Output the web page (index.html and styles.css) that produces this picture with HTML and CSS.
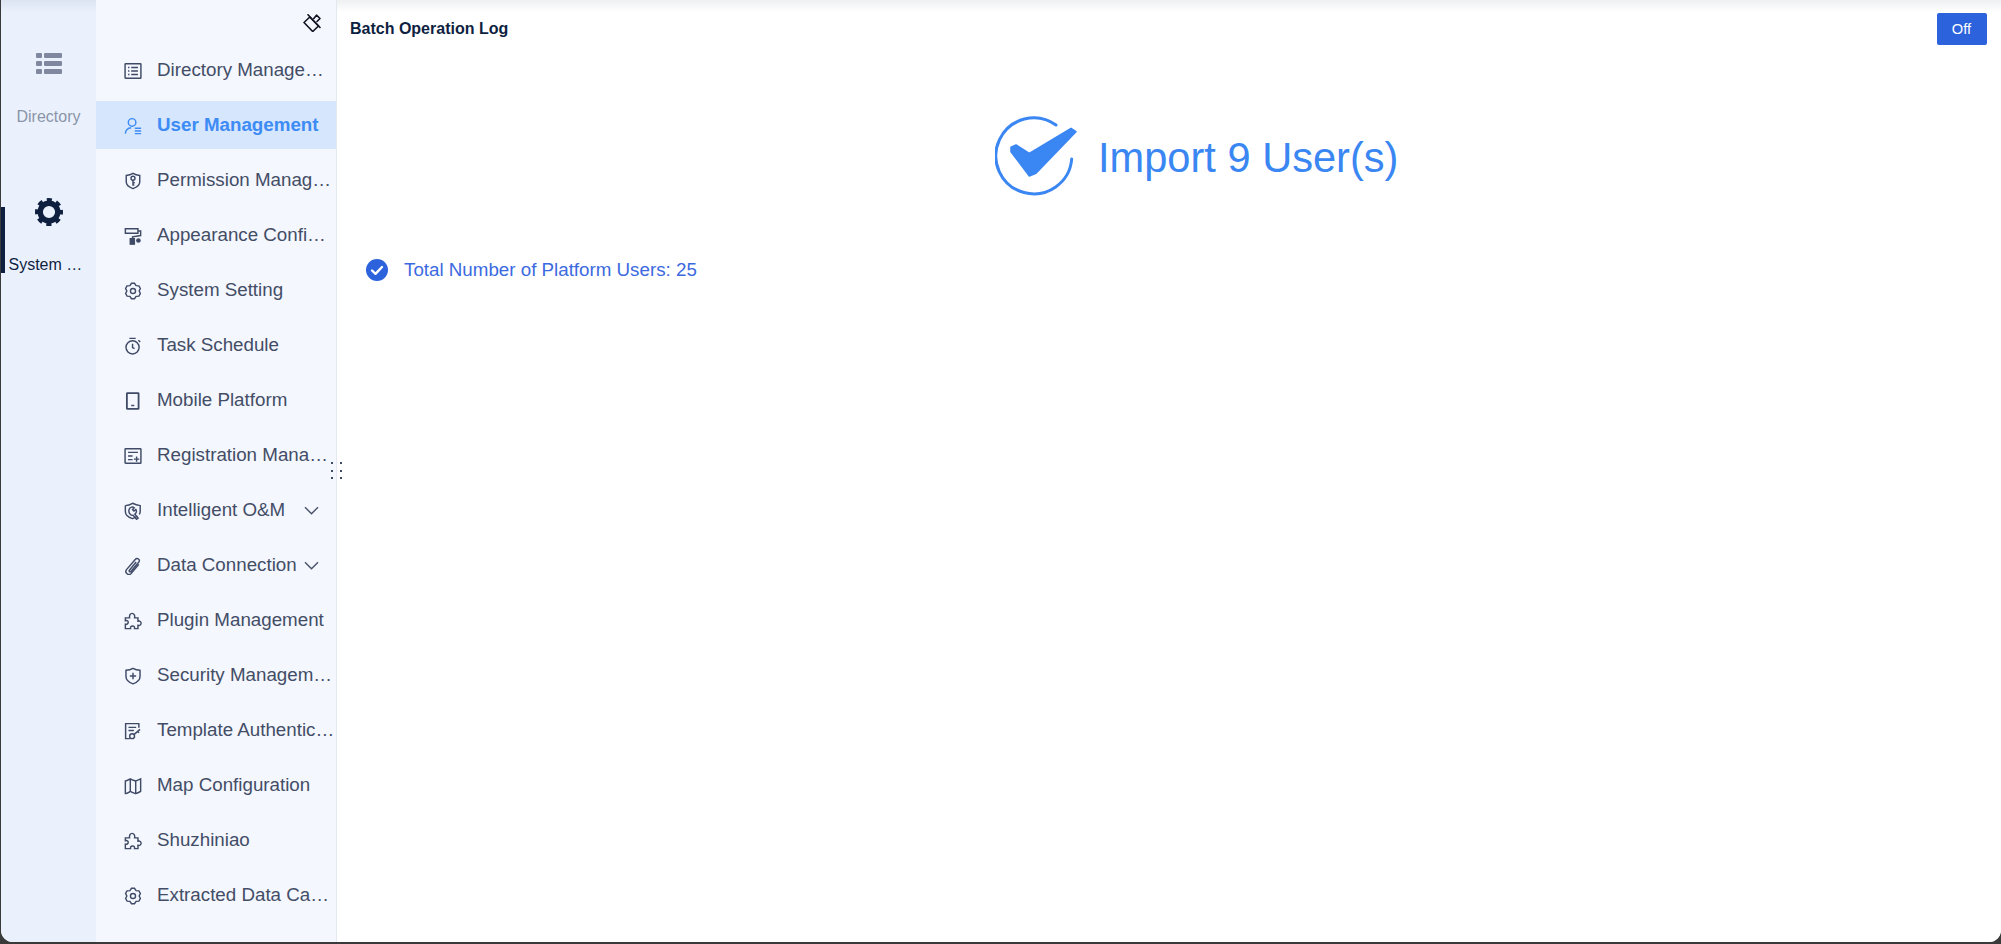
FILE: index.html
```html
<!DOCTYPE html>
<html lang="en">
<head>
<meta charset="utf-8">
<title>Batch Operation Log</title>
<link rel="stylesheet" href="styles.css">
</head>
<body>
<div class="app">
  <div class="topshade"></div>
  <nav class="rail">
    <div class="tab">
      <svg class="tab-icon" viewBox="0 0 26 26"><g fill="#7f889f"><rect x="0" y="2" width="6" height="5" rx="1"/><rect x="8" y="2" width="18" height="5" rx="1"/><rect x="0" y="10" width="6" height="5" rx="1"/><rect x="8" y="10" width="18" height="5" rx="1"/><rect x="0" y="18" width="6" height="5" rx="1"/><rect x="8" y="18" width="18" height="5" rx="1"/></g></svg>
      <div class="tab-label">Directory</div>
    </div>
    <div class="tab tab-active">
      <svg class="tab-icon" viewBox="0 0 28 28"><circle cx="14" cy="14" r="8.8" fill="none" stroke="#0f1f3f" stroke-width="5.4"/><circle cx="14" cy="14" r="12" fill="none" stroke="#0f1f3f" stroke-width="4" stroke-dasharray="5 4.42" stroke-dashoffset="2.5"/></svg>
      <div class="tab-label">System Management</div>
    </div>
  </nav>
  <aside class="menu">
    <div class="pin-row">
      <svg class="pin" viewBox="0 0 18 18" fill="none" stroke="#0f1320" stroke-width="1.6" stroke-linejoin="round" stroke-linecap="round"><path d="M1 8.500L6.800 3l8.700 9-5.800 5.500z"/><path d="M10.800 4.500L13.500 1.200 17 4.500l-3 3"/><path d="M5 .8L17 13.500"/></svg>
    </div>
    <ul class="items">
      <li class="item"><svg class="ico" viewBox="0 0 20 20"><rect x="1.200" y="2" width="17.600" height="16" rx=".6"/><path d="M4.500 6.200h1.500M8 6.200h7.500M4.500 10h1.500M8 10h7.500M4.500 13.800h1.500M8 13.800h7.500"/></svg><span class="label">Directory Management</span></li>
      <li class="item item-active"><svg class="ico" viewBox="0 0 20 20"><circle cx="9" cy="6" r="4.200"/><path d="M1.500 18.500c.3-4 3-6.300 6.500-6.600M12 12.500h7M12 15.500h7M12 18.500h7"/></svg><span class="label">User Management</span></li>
      <li class="item"><svg class="ico" viewBox="0 0 20 20"><path d="M2.500 3.800C6 3.600 8 2.800 10 1.500c2 1.300 4 2.100 7.500 2.300v7.400c0 3.200-3.500 5.900-7.500 7.300-4-1.400-7.500-4.100-7.500-7.300z"/><circle cx="10" cy="7" r="2.200"/><path d="M10 9.200v6M10 12h2M10 14.500h1.500"/></svg><span class="label">Permission Management</span></li>
      <li class="item"><svg class="ico" viewBox="0 0 20 20"><path d="M1.500 2h14v5h-14zM15.500 4.500h3v5l-9 1.500v2"/><rect x="7" y="13" width="4.500" height="6" fill="#3f4a66"/><circle cx="16" cy="15" r="2.600" fill="#3f4a66" stroke="none"/></svg><span class="label">Appearance Configuration</span></li>
      <li class="item"><svg class="ico ico-fine" viewBox="0 0 24 24"><path d="M10 1.700h4l2.100 3.200 3.800.2 1.900 3.500L20.200 12l1.600 3.400-1.900 3.500-3.800.2-2.100 3.200h-4l-2.100-3.200-3.800-.2-1.900-3.500L3.800 12 2.100 8.600 4 5.100l3.900-.2z"/><circle cx="12" cy="12" r="3.400"/></svg><span class="label">System Setting</span></li>
      <li class="item"><svg class="ico" viewBox="0 0 20 20"><circle cx="9.500" cy="11.500" r="7.300"/><path d="M6 1.500h7M9.500 7.500v4.200l2.200 1.300M16 3.500l2 2"/></svg><span class="label">Task Schedule</span></li>
      <li class="item"><svg class="ico" viewBox="0 0 20 20"><rect x="3.200" y="1.200" width="13" height="17.600" rx=".6" stroke-width="2"/><path d="M8 15h3.400"/></svg><span class="label">Mobile Platform</span></li>
      <li class="item"><svg class="ico" viewBox="0 0 20 20"><rect x="1.200" y="2" width="17.600" height="16" rx=".6"/><path d="M4.500 6h11M4.500 10h5M4.500 14h5M11 13.500h6M14 10.500v6"/></svg><span class="label">Registration Management</span></li>
      <li class="item"><svg class="ico" viewBox="0 0 20 20"><path d="M1.500 4c3-.3 5.700-1.300 8-2.600C12 2.700 15 3.700 18 4v6.500c0 1.200-.4 2.300-1 3.300"/><path d="M1.500 4v6.500c0 3.800 3.500 6.500 8 8 2-.7 3.800-1.700 5.200-3"/><path d="M6 7.500c1-2 3.700-2.500 5.300-1l-1.800 2 1.600 1.600 2-1.800c1.200 1.700.8 4-1 5.200l3.600 4.500-1.800 1.200-3.800-4.400c-3.500.5-5.800-4-4.100-7.300z"/></svg><span class="label">Intelligent O&amp;M</span><svg class="chev" viewBox="0 0 15 9"><path d="M1 1.200l6.500 6.500L14 1.200"/></svg></li>
      <li class="item"><svg class="ico" viewBox="0 0 20 20"><path d="M13.500 5.500L6 14.800c-.9 1.100.7 2.500 1.700 1.300l8.800-10.600c1.800-2.300-1.800-5.500-3.800-3L2.800 14c-2.600 3.300 2.400 7.500 5.300 4.200l8.400-10"/></svg><span class="label">Data Connection</span><svg class="chev" viewBox="0 0 15 9"><path d="M1 1.200l6.500 6.500L14 1.200"/></svg></li>
      <li class="item"><svg class="ico" viewBox="0 0 20 20"><path d="M1.500 6.500h4.700C5.600 3.800 7 1.500 9 1.500s3.400 2.300 2.800 5h3.700v3.700c2.200-.5 3.500.6 3.500 2.300s-1.300 2.800-3.500 2.300v3.700h-3.800c.4-2.200-.8-3-2.200-3s-2.600.8-2.200 3H1.500v-5c2 .4 3.200-.6 3.200-2.100S3.500 9.200 1.500 9.700z"/></svg><span class="label">Plugin Management</span></li>
      <li class="item"><svg class="ico" viewBox="0 0 20 20"><path d="M10 1.500c2.300 1.300 4.700 2 7.800 2.200v6.800c0 3.700-3.300 6.600-7.800 8.200-4.500-1.600-7.800-4.500-7.800-8.200V3.700C5.300 3.500 7.700 2.800 10 1.500z"/><path d="M10 6.500v7M6.500 10h7"/></svg><span class="label">Security Management</span></li>
      <li class="item"><svg class="ico" viewBox="0 0 20 20"><path d="M16.500 6.500V1.800H1.800v16.700h4.700"/><path d="M5 6h8.500M5 9.500h6"/><circle cx="9" cy="15.800" r="2.700"/><path d="M11 14l6.800-5.800"/><path d="M15 10.500l1.800 1.500"/></svg><span class="label">Template Authentication</span></li>
      <li class="item"><svg class="ico" viewBox="0 0 20 20"><path d="M1.500 4.500c2 0 3.500-1.300 5.500-2.500 2 1.200 4 1.800 6 2.500 1.800-.5 3.500-1.500 5.500-2.500v14c-2 1-3.700 1.900-5.500 2.500-2-.7-4-1.300-6-2.500-2 1.200-3.500 2.500-5.500 2.500zM7 2v14M13 4.500v14"/></svg><span class="label">Map Configuration</span></li>
      <li class="item"><svg class="ico" viewBox="0 0 20 20"><path d="M1.500 6.500h4.700C5.600 3.800 7 1.500 9 1.500s3.400 2.300 2.800 5h3.700v3.700c2.200-.5 3.500.6 3.500 2.300s-1.300 2.800-3.500 2.300v3.700h-3.800c.4-2.200-.8-3-2.200-3s-2.600.8-2.200 3H1.500v-5c2 .4 3.200-.6 3.200-2.100S3.500 9.200 1.500 9.700z"/></svg><span class="label">Shuzhiniao</span></li>
      <li class="item"><svg class="ico ico-fine" viewBox="0 0 24 24"><path d="M10 1.700h4l2.100 3.200 3.800.2 1.900 3.500L20.200 12l1.600 3.400-1.900 3.500-3.800.2-2.100 3.200h-4l-2.100-3.200-3.800-.2-1.900-3.500L3.800 12 2.100 8.600 4 5.100l3.900-.2z"/><circle cx="12" cy="12" r="3.400"/></svg><span class="label">Extracted Data Cache</span></li>
    </ul>
    <div class="grip"><i></i><i></i><i></i><i></i><i></i><i></i></div>
  </aside>
  <main class="main">
    <header class="bar">
      <h1 class="title">Batch Operation Log</h1>
      <button class="off">Off</button>
    </header>
    <section class="result">
      <svg class="big-check" viewBox="0 0 82 80"><path d="M76.700 43A38 38 0 1 1 61 9" fill="none" stroke="#3a86f2" stroke-width="3" stroke-linecap="round"/><path d="M16 31.300L21 29l13.300 8.300L76 12.300l5 3.400L41 57.300 34.300 60 16 35.700z" fill="#3a86f2" stroke="#3a86f2" stroke-width="1.500" stroke-linejoin="round"/></svg>
      <div class="result-text">Import 9 User(s)</div>
    </section>
    <div class="summary">
      <svg class="dot-check" viewBox="0 0 22 22"><circle cx="11" cy="11" r="11" fill="#2c62dc"/><path d="M6 11.500l3.500 3.300L16 8" fill="none" stroke="#fff" stroke-width="2.400" stroke-linecap="round" stroke-linejoin="round"/></svg>
      <span>Total Number of Platform Users: 25</span>
    </div>
  </main>
</div>
</body>
</html>
```
FILE: styles.css
```css
* { box-sizing: border-box; }
html, body { margin: 0; height: 100%; }
body {
  background: #3a3a3a;
  font-family: "Liberation Sans", Arial, sans-serif;
  overflow: hidden;
}
.app {
  position: relative;
  display: flex;
  width: 1999.5px;
  height: 941.5px;
  margin-left: 1px;
  border-radius: 0 0 12px 12px;
  overflow: hidden;
  background: #fff;
}
.topshade {
  position: absolute;
  top: 0;
  left: 0;
  right: 0;
  height: 12px;
  background: linear-gradient(to bottom, rgba(120, 130, 150, .12), rgba(120, 130, 150, 0));
  pointer-events: none;
}

/* left rail */
.rail {
  flex: 0 0 95px;
  padding-top: 51px;
  background: #eaf1fd;
}
.tab {
  position: relative;
  display: flex;
  flex-direction: column;
  align-items: center;
  height: 148px;
}
.tab-icon { width: 26px; height: 26px; display: block; flex: none; }
.tab-active .tab-icon { width: 28px; height: 28px; margin-top: -1px; margin-bottom: -1px; }
.tab-label {
  width: 80px;
  margin-top: 30px;
  font-size: 16px;
  line-height: 20px;
  text-align: center;
  color: #8a94a8;
  white-space: nowrap;
  overflow: hidden;
  text-overflow: ellipsis;
}
.tab-active .tab-label { color: #0f1f3f; }
.tab-active::before {
  content: "";
  position: absolute;
  left: 0;
  top: 8px;
  width: 4px;
  height: 66px;
  background: #0f1f3f;
}

/* secondary menu */
.menu {
  position: relative;
  flex: 0 0 241px;
  min-width: 0;
  background: #f4f7fe;
  border-right: 1px solid #e4e8f0;
}
.pin-row {
  display: flex;
  justify-content: flex-end;
  height: 46px;
  padding: 14px 15px 0 0;
}
.pin { width: 18px; height: 18px; display: block; }
.items { list-style: none; margin: 0; padding: 0; }
.item {
  display: flex;
  align-items: center;
  gap: 15px;
  height: 48px;
  margin-bottom: 7px;
  padding: 0 1px 0 28px;
  font-size: 18.75px;
  color: #434d66;
}
.item-active {
  background: #d6e6fc;
  color: #3d8bf5;
  font-weight: 700;
}
.ico {
  width: 18px;
  height: 18px;
  flex: none;
  fill: none;
  stroke: #3f4a66;
  stroke-width: 1.6;
  margin-top: 2px;
}
.ico-fine { stroke-width: 1.9; }
.item-active .ico { stroke: #3d8bf5; }
.label {
  flex: 1;
  min-width: 0;
  white-space: nowrap;
  overflow: hidden;
  text-overflow: ellipsis;
}
.chev {
  width: 15px;
  height: 9px;
  flex: none;
  margin: 0 16px 0 -8px;
  fill: none;
  stroke: #475168;
  stroke-width: 1.4;
}
.grip {
  position: absolute;
  top: 462px;
  left: 235px;
  display: grid;
  grid-template-columns: 2px 2px;
  column-gap: 7px;
  row-gap: 5.5px;
}
.grip i { width: 2px; height: 2px; background: #3e4a63; display: block; }

/* main panel */
.main { flex: 1; min-width: 0; background: #fff; }
.bar {
  display: flex;
  justify-content: space-between;
  align-items: flex-start;
  height: 58px;
  padding: 13px 14px 0 13px;
}
.title {
  margin: 6px 0 0;
  font-size: 16px;
  line-height: 20px;
  font-weight: 700;
  color: #0f1f3f;
}
.off {
  width: 50px;
  height: 32px;
  padding: 0;
  border: 0;
  border-radius: 2px;
  background: #2c62dc;
  color: #fff;
  font: 14.67px/32px "Liberation Sans", Arial, sans-serif;
}
.result {
  display: flex;
  justify-content: center;
  align-items: center;
  gap: 21px;
  padding: 58px 0 0 56px;
}
.big-check { width: 82px; height: 80px; display: block; flex: none; }
.result-text {
  position: relative;
  top: 2px;
  font-size: 41.6px;
  line-height: 50px;
  color: #3a86f2;
}
.summary {
  display: flex;
  align-items: center;
  gap: 16px;
  margin-top: 63px;
  padding-left: 29px;
  font-size: 18.75px;
  line-height: 22px;
  color: #3b6ae0;
}
.dot-check { width: 22px; height: 22px; display: block; flex: none; }
```
